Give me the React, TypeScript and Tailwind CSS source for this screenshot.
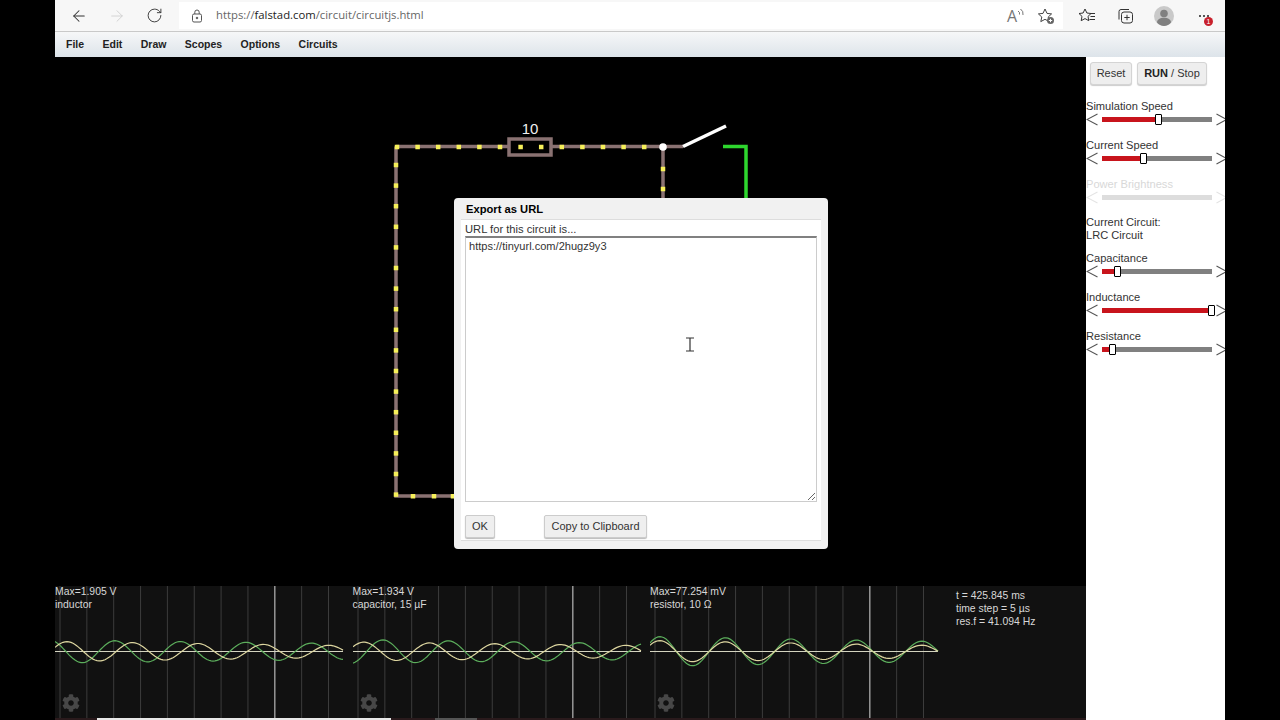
import React from "react";
import { ArrowLeft, ArrowRight, RotateCw } from "lucide-react";
import { FaCog } from "react-icons/fa";

// wave path in scope coordinates, amplitude fades from a0 to a1
const wave = (width: number, cy: number, a0: number, a1: number, period: number, peak: number) => {
  const pts: string[] = [];
  for (let x = 0; x <= width; x += 2) {
    const a = a0 + ((a1 - a0) * x) / width;
    const y = cy - a * Math.cos(((x - peak) / period) * Math.PI * 2);
    pts.push(`${x === 0 ? "M" : "L"}${x} ${y.toFixed(1)}`);
  }
  return pts.join(" ");
};

const gridLines = Array.from({ length: 11 }, (_, i) => 5 + i * 26.85);

type ScopeProps = {
  max: string;
  name: string;
  green: [number, number, number];
  yellow: [number, number, number];
};

const Scope = ({ max, name, green, yellow }: ScopeProps) => (
  <div className="relative w-[297.5px] h-full shrink-0 text-[10.4px] leading-[13px] text-[#d8d8d8]">
    <svg className="absolute left-0 top-0" width="297" height="132">
      {gridLines.map((x, i) => (
        <line key={i} x1={x} x2={x} y1="0" y2="132" stroke={i === 8 ? "#a0a0a0" : "#3c3c3c"} strokeWidth={i === 8 ? 1.4 : 1} />
      ))}
      <line x1="0" x2="288" y1="65.5" y2="65.5" stroke="#d4d4c0" strokeWidth="1.1" />
      <path d={wave(288, 65.5, green[0], green[1], 65.5, green[2])} fill="none" stroke="#5cae5c" strokeWidth="1.2" />
      <path d={wave(288, 65.5, yellow[0], yellow[1], 65.5, yellow[2])} fill="none" stroke="#ddd6a0" strokeWidth="1.2" />
    </svg>
    <div className="relative -mt-[1px]">
      <div>{max}</div>
      <div>{name}</div>
    </div>
    <FaCog className="absolute left-[7px] top-[108px] text-[#474747]" size={18} />
  </div>
);

const Slider = ({ value, disabled }: { value?: number; disabled?: boolean }) => {
  const arrow = disabled ? "#e4e4e4" : "#555555";
  return (
    <div className="flex items-center h-[13px] w-[141px] shrink-0">
      <svg width="12" height="13" className="shrink-0">
        <polyline points="11.5,1 1,6.5 11.5,12" fill="none" stroke={arrow} strokeWidth="1.1" />
      </svg>
      <div className={`relative ml-[4px] w-[110px] h-[5px] ${disabled ? "bg-[#dddddd]" : "bg-[#808080]"}`}>
        {value !== undefined && (
          <>
            <div className="absolute left-0 top-0 h-full bg-[#c8141c]" style={{ width: value }} />
            <div
              className="absolute top-[-3px] w-[7px] h-[11px] bg-white border-[1.5px] border-black rounded-[1px]"
              style={{ left: value - 3.5 }}
            />
          </>
        )}
      </div>
      <svg width="11" height="13" className="ml-[4px] shrink-0">
        <polyline points="0.5,1 10.5,6.5 0.5,12" fill="none" stroke={arrow} strokeWidth="1.1" />
      </svg>
    </div>
  );
};

const SliderBlock = ({ label, value, disabled }: { label: string; value?: number; disabled?: boolean }) => (
  <div className="h-[38.75px]">
    <div className={`h-[13px] leading-[13px] ${disabled ? "text-[#d8d8d8]" : "text-[#333333]"}`}>{label}</div>
    <Slider value={value} disabled={disabled} />
  </div>
);

const Toolbar = () => (
  <div className="h-[32px] shrink-0 bg-[#f7f7f7] border-b border-[#c9c9c9] flex items-center pl-[15px] text-[#333]">
    <ArrowLeft size={18} strokeWidth={1.4} />
    <ArrowRight size={18} strokeWidth={1.2} className="ml-[20px] text-[#cfcfcf]" />
    <RotateCw size={17} strokeWidth={1.3} className="ml-[20px]" />
    <div className="ml-[16px] w-[884px] h-[27px] bg-white flex items-center font-['Open_Sans',sans-serif] text-[11.3px] text-[#666]">
      <svg width="14" height="14" viewBox="0 0 14 14" className="ml-[11px]" fill="none" stroke="#555" strokeWidth="1">
        <rect x="2.5" y="5" width="9" height="8" rx="1.5" />
        <path d="M4.8 5V3.2a2.2 2.2 0 0 1 4.4 0V5" />
        <circle cx="7" cy="9" r="0.8" fill="#555" />
      </svg>
      <span className="ml-[12px]">
        https://<span className="text-[#222]">falstad.com</span>/circuit/circuitjs.html
      </span>
      {/* read aloud and add favourite */}
      <span className="ml-auto font-['Open_Sans',sans-serif] text-[16px] text-[#777] leading-none">A</span>
      <svg width="7" height="10" viewBox="0 0 7 10" fill="none" stroke="#666" strokeWidth="0.9" className="mb-[6px] mr-[13px]">
        <path d="M1 3a3 3 0 0 1 1.500 3.500M3.500 1a6 6 0 0 1 2.500 6" />
      </svg>
      <svg width="18" height="18" viewBox="0 0 18 18" fill="none" stroke="#444" strokeWidth="1" className="mr-[8px]">
        <path d="M8 2l2 4.400 4.600.5-3.400 3.100 1 4.600L8 12.300l-4.200 2.300 1-4.600L1.400 6.900 6 6.400z" />
        <circle cx="13.500" cy="13.500" r="3.500" fill="#666" stroke="none" />
        <path d="M13.500 11.800v3.400M11.800 13.500h3.400" stroke="#fff" />
      </svg>
    </div>
    <svg width="18" height="18" viewBox="0 0 18 18" fill="none" stroke="#333" strokeWidth="1" className="ml-[15px]">
      <path d="M7 2l1.900 4 4.100.5-3 2.900.8 4.300L7 11.600l-3.800 2.100.8-4.300-3-2.900 4.100-.5z" />
      <path d="M12 6.500h5M12.500 9.500h4.500M11.500 12.500h5.500" />
    </svg>
    <svg width="18" height="18" viewBox="0 0 18 18" fill="none" stroke="#333" strokeWidth="1" className="ml-[20px]">
      <path d="M3 12.500V4.500A2 2 0 0 1 5 2.500h8" />
      <rect x="5.500" y="5" width="11" height="11" rx="2.500" />
      <path d="M11 7.800v5.400M8.300 10.500h5.400" />
    </svg>
    <svg width="20" height="20" viewBox="0 0 20 20" className="ml-[20px]">
      <circle cx="10" cy="10" r="10" fill="#c9c9c9" />
      <circle cx="10" cy="7.500" r="3.800" fill="#808080" />
      <path d="M3 16.500c0-3 3-4.800 7-4.800s7 1.800 7 4.800c-1.800 2-4.200 3.500-7 3.500s-5.200-1.500-7-3.500z" fill="#808080" />
    </svg>
    <div className="relative ml-[25px] w-[12px] h-[18px] flex items-center gap-[2px]">
      <span className="w-[2px] h-[2px] rounded-full bg-[#222]" />
      <span className="w-[2px] h-[2px] rounded-full bg-[#222]" />
      <span className="w-[2px] h-[2px] rounded-full bg-[#222]" />
      <span className="absolute left-[5px] top-[10px] w-[9px] h-[9px] rounded-full bg-[#c8202c] text-white text-[7px] leading-[9px] text-center">1</span>
    </div>
  </div>
);

const menuItems = ["File", "Edit", "Draw", "Scopes", "Options", "Circuits"];

const MenuBar = () => (
  <div className="h-[25px] shrink-0 bg-gradient-to-b from-[#f6f7f8] to-[#dde4ea] flex items-center pl-[11px] gap-[18.4px] text-[10.5px] font-bold text-[#222]">
    {menuItems.map((m) => (
      <span key={m}>{m}</span>
    ))}
  </div>
);

const Circuit = () => {
  const topDots = Array.from({ length: 13 }, (_, i) => 397 + i * 20.6);
  const leftDots = Array.from({ length: 17 }, (_, i) => 165 + i * 20.6);
  const dot = "#f6f05a";
  return (
    // drawn in page coordinates, shifted by the viewBox
    <svg className="absolute left-0 top-0" width="1031" height="529" viewBox="55 57 1031 529">
      <g fill="none" stroke="#8a7272" strokeWidth="3.500">
        <path d="M396 146.500H508M552 146.500H683M663 146.500V200M396 146.500V496H456" />
        <rect x="509" y="139" width="42" height="16" />
      </g>
      <path d="M683 146.500L726 126" stroke="#fff" strokeWidth="3.500" />
      <path d="M723 146.500H746V200" fill="none" stroke="#2ed62e" strokeWidth="3.500" />
      <circle cx="663" cy="147" r="3.800" fill="#fff" />
      {topDots.map((x) => (
        <rect key={x} x={x - 2.25} y="144.750" width="4.500" height="4.500" fill={dot} />
      ))}
      {leftDots.map((y) => (
        <rect key={y} x="393.750" y={y - 2.25} width="4.500" height="4.500" fill={dot} />
      ))}
      {[169, 189].map((y) => (
        <rect key={y} x="660.750" y={y - 2.25} width="4.500" height="4.500" fill={dot} />
      ))}
      {[413, 434, 453].map((x) => (
        <rect key={x} x={x - 2.25} y="494" width="4.500" height="4.500" fill={dot} />
      ))}
      <text x="530" y="134" textAnchor="middle" fill="#f0f0f0" fontSize="15">10</text>
    </svg>
  );
};

const Dialog = () => (
  <div className="absolute left-[399px] top-[141px] w-[374px] h-[351px] bg-[#f1f1f1] rounded-[4px] flex flex-col text-[11.2px] text-[#333]">
    <div className="h-[21px] shrink-0 pl-[12px] leading-[22px] font-bold text-black text-[11.2px]">Export as URL</div>
    <div className="mx-[7px] h-[322px] bg-white border-t border-b border-[#dddddd] pl-[4px] pr-[5px] flex flex-col">
      <div className="h-[16px] leading-[18px] shrink-0">URL for this circuit is...</div>
      <textarea
        readOnly
        value="https://tinyurl.com/2hugz9y3"
        className="w-[352px] h-[266px] shrink-0 resize border border-[#cccccc] border-t-2 border-t-[#808080] px-[3px] py-[1px] leading-[15px] text-[11.05px] text-[#333] outline-none"
      />
      <div className="flex mt-[13px] items-start">
        <button className="w-[30px] h-[23px] bg-[#efefef] border border-[#cccccc] rounded-[2px] shadow-[0_1px_1px_#bbbbbb] text-[11px]">OK</button>
        <button className="ml-[49px] w-[103px] h-[23px] bg-[#efefef] border border-[#cccccc] rounded-[2px] shadow-[0_1px_1px_#bbbbbb] text-[11px]">Copy to Clipboard</button>
      </div>
    </div>
    {/* text cursor over the textarea */}
    <svg className="absolute left-[231px] top-[139px]" width="10" height="15" viewBox="0 0 10 15" fill="none" stroke="#333" strokeWidth="1.2">
      <path d="M1 1h8M1 14h8M5 1v13" />
    </svg>
  </div>
);

const Sidebar = () => (
  <div className="w-[139px] shrink-0 bg-white overflow-hidden text-[11.1px]">
    <div className="flex gap-[5px] pl-[4px] pt-[5px] h-[43px] text-[#333] text-[11px]">
      <button className="w-[42px] h-[23px] bg-[#eeeeee] border border-[#d4d4d4] rounded-[3px] shadow-[0_1px_1px_#cccccc]">Reset</button>
      <button className="w-[70px] h-[23px] bg-[#eeeeee] border border-[#d4d4d4] rounded-[3px] shadow-[0_1px_1px_#cccccc]">
        <b className="text-[#222]">RUN</b> / Stop
      </button>
    </div>
    <SliderBlock label="Simulation Speed" value={56} />
    <SliderBlock label="Current Speed" value={41} />
    <SliderBlock label="Power Brightness" disabled />
    <div className="h-[36px] leading-[13px] text-[#333]">
      <div>Current Circuit:</div>
      <div>LRC Circuit</div>
    </div>
    <SliderBlock label="Capacitance" value={15} />
    <SliderBlock label="Inductance" value={109} />
    <SliderBlock label="Resistance" value={10} />
  </div>
);

export default function App() {
  return (
    <div className="w-[1280px] h-[720px] bg-black flex justify-center overflow-hidden font-['Liberation_Sans',Arial,sans-serif]">
      <div className="w-[1170px] h-full flex flex-col">
        <Toolbar />
        <MenuBar />
        <div className="flex-1 flex min-h-0">
          <div className="w-[1031px] shrink-0 flex flex-col">
            <div className="relative h-[529px] shrink-0 bg-black">
              <Circuit />
              <Dialog />
            </div>
            <div className="h-[132px] shrink-0 bg-[#111111] flex">
              <Scope max="Max=1.905 V" name="inductor" green={[11.5, 8, 60]} yellow={[10, 6, 12]} />
              <Scope max="Max=1.934 V" name="capacitor, 15 µF" green={[12, 8, 30]} yellow={[9.5, 6, 11]} />
              <Scope max="Max=77.254 mV" name="resistor, 10 Ω" green={[15, 10, 10]} yellow={[11, 6, 10]} />
              <div className="ml-[8.500px] pt-[3px] text-[10.4px] leading-[13px] text-[#d8d8d8]">
                <div>t = 425.845 ms</div>
                <div>time step = 5 µs</div>
                <div>res.f = 41.094 Hz</div>
              </div>
            </div>
            <div className="h-[2px] shrink-0 flex bg-[#2a1a1c]">
              <div className="w-[42px]" />
              <div className="w-[294px] bg-[#e8e8e8]" />
              <div className="w-[44px]" />
              <div className="w-[42px] bg-[#555555]" />
            </div>
          </div>
          <Sidebar />
        </div>
      </div>
    </div>
  );
}
